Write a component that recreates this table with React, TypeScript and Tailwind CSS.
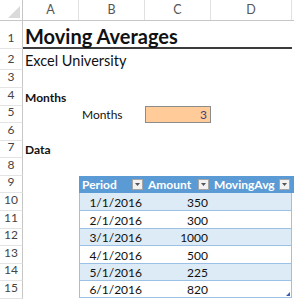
const font = { fontFamily: "Lato, 'Liberation Sans', sans-serif" };

function RowHead({ n, h }: { n: number; h: string }) {
  return (
    <div className={`${h} w-[23px] shrink-0 border-r border-b border-r-[#c6c6c6] border-b-[#e4e4e4] flex items-end justify-center pb-[1px] text-[12px] text-[#444]`}>
      {n}
    </div>
  );
}

function Drop() {
  return (
    <span className="w-[11px] h-[11px] shrink-0 bg-[#f2f2f2] border border-[#a6a6a6] flex items-center justify-center">
      <svg width="5" height="3" viewBox="0 0 5 3">
        <path d="M0 0h5L2.5 3z" fill="#555" />
      </svg>
    </span>
  );
}

const data = [
  ["1/1/2016", "350"],
  ["2/1/2016", "300"],
  ["3/1/2016", "1000"],
  ["4/1/2016", "500"],
  ["5/1/2016", "225"],
  ["6/1/2016", "820"],
];
const dataH = ["h-[18px]", "h-[18px]", "h-[17px]", "h-[18px]", "h-[17px]", "h-[18px]"];
const dataH2 = ["h-[18px]", "h-[18px]", "h-[17px]", "h-[18px]", "h-[17px]", "h-[17px]"];

export default function App() {
  return (
    <div className="w-[294px] h-[300px] bg-white overflow-hidden text-[#111]" style={font}>
      {/* column header */}
      <div className="flex h-[21px] border-b border-[#c6c6c6]">
        <div className="w-[23px] shrink-0 border-r border-[#c6c6c6] relative">
          <svg className="absolute right-[2px] bottom-[2px]" width="12" height="12" viewBox="0 0 12 12">
            <path d="M12 0V12H0z" fill="#dadada" />
          </svg>
        </div>
        {[
          ["A", "w-[56px]"],
          ["B", "w-[66px]"],
          ["C", "w-[66px]"],
          ["D", "w-[81px]"],
        ].map(([l, w]) => (
          <div key={l} className={`${w} shrink-0 border-r border-[#e1e1e1] flex items-center justify-center text-[12.5px] text-[#555]`}>
            {l}
          </div>
        ))}
      </div>

      {/* row 1 */}
      <div className="flex h-[28px]">
        <RowHead n={1} h="h-[28px]" />
        <div className="w-[269px] shrink-0 border-b-2 border-[#3b3b3b] flex items-end pl-[2px] pb-[1px] text-[20px] font-bold leading-none">
          Moving Averages
        </div>
      </div>

      {/* row 2 */}
      <div className="flex h-[21px]">
        <RowHead n={2} h="h-[21px]" />
        <div className="flex items-end pl-[2px] pb-[2px] text-[14.5px] leading-none">Excel University</div>
      </div>

      {/* row 3 */}
      <div className="flex h-[18px]">
        <RowHead n={3} h="h-[18px]" />
      </div>

      {/* row 4 */}
      <div className="flex h-[18px]">
        <RowHead n={4} h="h-[18px]" />
        <div className="flex items-end pl-[2px] pb-[2px] text-[12px] font-bold leading-none">Months</div>
      </div>

      {/* row 5 */}
      <div className="flex h-[17px]">
        <RowHead n={5} h="h-[17px]" />
        <div className="w-[56px] shrink-0" />
        <div className="w-[66px] shrink-0 flex items-end pl-[3px] pb-[2px] text-[12px] leading-none">Months</div>
        <div className="w-[66px] shrink-0 bg-[#ffcc99] border border-[#8c8c8c] flex items-end justify-end pr-[3px] pb-[1px] text-[12px] leading-none text-[#3f3f76]">
          3
        </div>
      </div>

      {/* row 6 */}
      <div className="flex h-[18px]">
        <RowHead n={6} h="h-[18px]" />
      </div>

      {/* row 7 */}
      <div className="flex h-[17px]">
        <RowHead n={7} h="h-[17px]" />
        <div className="flex items-end pl-[2px] pb-[2px] text-[12px] font-bold leading-none">Data</div>
      </div>

      {/* row 8 */}
      <div className="flex h-[18px]">
        <RowHead n={8} h="h-[18px]" />
      </div>

      {/* row 9 - table header */}
      <div className="flex h-[17px]">
        <RowHead n={9} h="h-[17px]" />
        <div className="w-[56px] shrink-0" />
        <div className="w-[269px] shrink-0 flex bg-[#5b9bd5] text-white font-bold text-[12px] leading-none">
          <div className="w-[66px] shrink-0 flex items-center justify-between pl-[3px] pr-[2px]">
            <span>Period</span>
            <Drop />
          </div>
          <div className="w-[66px] shrink-0 flex items-center justify-between pl-[3px] pr-[2px]">
            <span>Amount</span>
            <Drop />
          </div>
          <div className="w-[81px] shrink-0 flex items-center justify-between pl-[3px] pr-[2px]">
            <span>MovingAvg</span>
            <Drop />
          </div>
        </div>
      </div>

      {data.map(([d, a], i) => (
        <div key={d} className={`flex ${dataH[i]}`}>
          <RowHead n={10 + i} h={dataH[i]} />
          <div className="w-[56px] shrink-0" />
          <div
            className={`${dataH2[i]} w-[213px] shrink-0 flex border-l border-r border-b border-[#9bc2e6] text-[12px] leading-none ${
              i % 2 === 0 ? "bg-[#ddebf7]" : "bg-white"
            }`}
          >
            <div className="w-[65px] shrink-0 flex items-end justify-end pr-[3px] pb-[1px]">{d}</div>
            <div className="w-[66px] shrink-0 flex items-end justify-end pr-[3px] pb-[1px]">{a}</div>
            <div className="w-[80px] shrink-0 relative">
              {i === data.length - 1 && (
                <svg className="absolute right-[1px] bottom-[1px]" width="4" height="4" viewBox="0 0 4 4">
                  <path d="M4 0V4H0z" fill="#3a5fb0" />
                </svg>
              )}
            </div>
          </div>
        </div>
      ))}
    </div>
  );
}
